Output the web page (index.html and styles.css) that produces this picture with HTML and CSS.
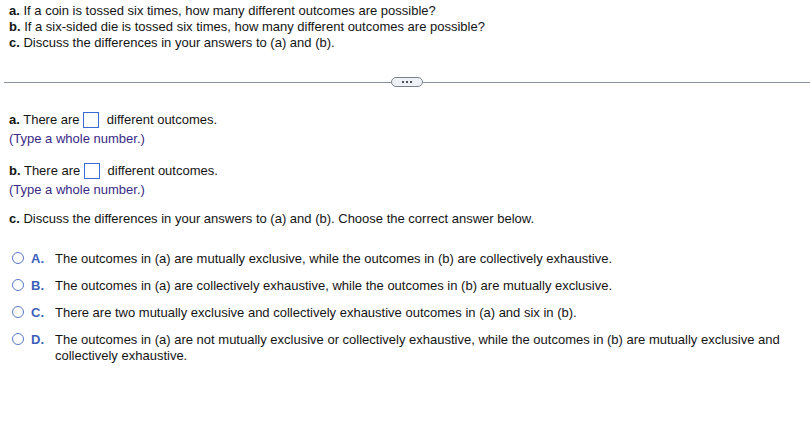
FILE: index.html
```html
<!DOCTYPE html>
<html>
<head>
<meta charset="utf-8">
<link rel="stylesheet" href="styles.css">
</head>
<body>
<div class="page">
  <div class="question">
    <div><b>a.</b> If a coin is tossed six times, how many different outcomes are possible?</div>
    <div><b>b.</b> If a six-sided die is tossed six times, how many different outcomes are possible?</div>
    <div><b>c.</b> Discuss the differences in your answers to (a) and (b).</div>
  </div>
  <div class="divider">
    <span class="rule"></span>
    <span class="pill"><i></i><i></i><i></i></span>
    <span class="rule"></span>
  </div>
  <div class="answers">
    <div class="part">
      <div class="fill"><b>a.</b> There are <span class="box"></span> different outcomes.</div>
      <div class="hint">(Type a whole number.)</div>
    </div>
    <div class="part">
      <div class="fill"><b>b.</b> There are <span class="box"></span> different outcomes.</div>
      <div class="hint">(Type a whole number.)</div>
    </div>
    <div class="prompt"><b>c.</b> Discuss the differences in your answers to (a) and (b). Choose the correct answer below.</div>
    <ul class="choices">
      <li><span class="radio"></span><span class="letter">A.</span><span class="text">The outcomes in (a) are mutually exclusive, while the outcomes in (b) are collectively exhaustive.</span></li>
      <li><span class="radio"></span><span class="letter">B.</span><span class="text">The outcomes in (a) are collectively exhaustive, while the outcomes in (b) are mutually exclusive.</span></li>
      <li><span class="radio"></span><span class="letter">C.</span><span class="text">There are two mutually exclusive and collectively exhaustive outcomes in (a) and six in (b).</span></li>
      <li><span class="radio"></span><span class="letter">D.</span><span class="text">The outcomes in (a) are not mutually exclusive or collectively exhaustive, while the outcomes in (b) are mutually exclusive and collectively exhaustive.</span></li>
    </ul>
  </div>
</div>
</body>
</html>
```

FILE: styles.css
```css
html, body {
  margin: 0;
  padding: 0;
  background: #ffffff;
}
body {
  font-family: "Liberation Sans", Arial, sans-serif;
  font-size: 13px;
  line-height: 16px;
  color: #141414;
}
.page {
  width: 810px;
}
.question {
  padding: 3px 9px 0 9px;
}
.divider {
  display: flex;
  align-items: center;
  margin: 26px 0 0 4px;
  height: 10px;
}
.rule {
  flex: 1;
  height: 1px;
  background: #8a929c;
}
.pill {
  width: 30px;
  height: 8px;
  border: 1px solid #7b838e;
  border-radius: 5px;
  background: #eef1f5;
  display: flex;
  align-items: center;
  justify-content: center;
  gap: 2px;
}
.pill i {
  width: 2px;
  height: 2px;
  background: #4a525c;
  display: block;
}
.answers {
  padding: 0 9px;
}
.part {
  margin-top: 24px;
}
.part + .part {
  margin-top: 15px;
}
.fill {
  display: flex;
  align-items: center;
  height: 18px;
  white-space: pre;
}
.box {
  display: inline-block;
  width: 14px;
  height: 14px;
  border: 1px solid #3b6ad0;
  margin: 0 4px 0 0;
}
.hint {
  color: #3a2a86;
  margin-top: 2px;
}
.prompt {
  margin-top: 13px;
}
.choices {
  list-style: none;
  margin: 24px 0 0 0;
  padding: 0;
}
.choices li {
  display: flex;
  align-items: flex-start;
  margin-bottom: 11px;
}
.radio {
  flex: none;
  width: 10px;
  height: 10px;
  border: 1.5px solid #5a78c8;
  border-radius: 50%;
  margin: 1px 7px 0 3px;
}
.letter {
  flex: none;
  width: 24px;
  font-weight: bold;
  color: #3d5fb8;
}
.text {
  flex: 1;
  padding-right: 20px;
}
```
